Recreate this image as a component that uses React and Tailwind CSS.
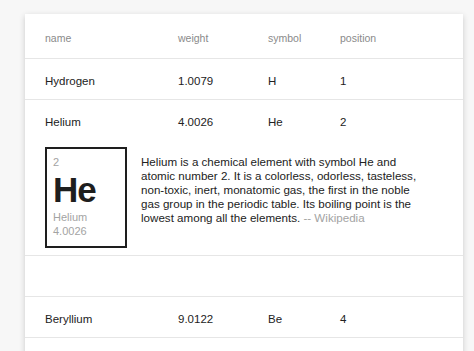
import React from "react";

const rows = [
  { name: "Hydrogen", weight: "1.0079", symbol: "H", position: 1 },
  { name: "Helium", weight: "4.0026", symbol: "He", position: 2, expanded: true },
  { blank: true },
  { name: "Beryllium", weight: "9.0122", symbol: "Be", position: 4 },
];

const Cells = ({ a, b, c, d, className }) => (
  <div className={`flex items-center h-full pl-[20px] pt-[5px] ${className}`}>
    <div className="w-[133px]">{a}</div>
    <div className="w-[90px]">{b}</div>
    <div className="w-[72px]">{c}</div>
    <div>{d}</div>
  </div>
);

export default function App() {
  return (
    <div
      className="h-[351px] overflow-hidden bg-[#f7f7f7] pt-[14px] pl-[25px]"
      style={{ fontFamily: '"Liberation Sans", Arial, sans-serif' }}
    >
      <div className="w-[438px] bg-white shadow-[0_2px_6px_rgba(0,0,0,0.18)]">
        {/* header */}
        <div className="h-[45px] border-b border-[#e6e6e6]">
          <Cells
            className="text-[10.5px] text-[#8a8a8a]"
            a="name"
            b="weight"
            c="symbol"
            d="position"
          />
        </div>

        {rows.map((row, i) => {
          if (row.blank) {
            return <div key={i} className="h-[41px] border-b border-[#e6e6e6]" />;
          }
          if (row.expanded) {
            return (
              <React.Fragment key={i}>
                <div className="h-[40px]">
                  <Cells
                    className="text-[11.5px] text-[#222]"
                    a={row.name}
                    b={row.weight}
                    c={row.symbol}
                    d={row.position}
                  />
                </div>
                <div className="flex items-start pl-[20px] pt-[7px] pb-[7px] border-b border-[#e6e6e6]">
                  <div className="w-[82px] h-[101px] border-2 border-[#1e1e1e] px-[6px] pt-[6px] shrink-0">
                    <div className="text-[11px] leading-[14px] text-[#a3a3a3]">2</div>
                    <div className="text-[35px] leading-[35px] font-bold text-[#1e1e1e] mt-[3px] tracking-[-1px]">
                      He
                    </div>
                    <div className="text-[11px] leading-[14px] text-[#a3a3a3] mt-[3px]">
                      Helium
                    </div>
                    <div className="text-[11px] leading-[14px] text-[#a3a3a3]">4.0026</div>
                  </div>
                  <div className="w-[285px] ml-[14px] mt-[8px] text-[11.6px] leading-[14px] text-[#222]">
                    Helium is a chemical element with symbol He and atomic number 2. It is a
                    colorless, odorless, tasteless, non-toxic, inert, monatomic gas, the first
                    in the noble gas group in the periodic table. Its boiling point is the
                    lowest among all the elements.{" "}
                    <span className="text-[#a3a3a3]">-- Wikipedia</span>
                  </div>
                </div>
              </React.Fragment>
            );
          }
          return (
            <div key={i} className="h-[41px] border-b border-[#e6e6e6]">
              <Cells
                className="text-[11.5px] text-[#222]"
                a={row.name}
                b={row.weight}
                c={row.symbol}
                d={row.position}
              />
            </div>
          );
        })}
        <div className="h-[30px]" />
      </div>
    </div>
  );
}
